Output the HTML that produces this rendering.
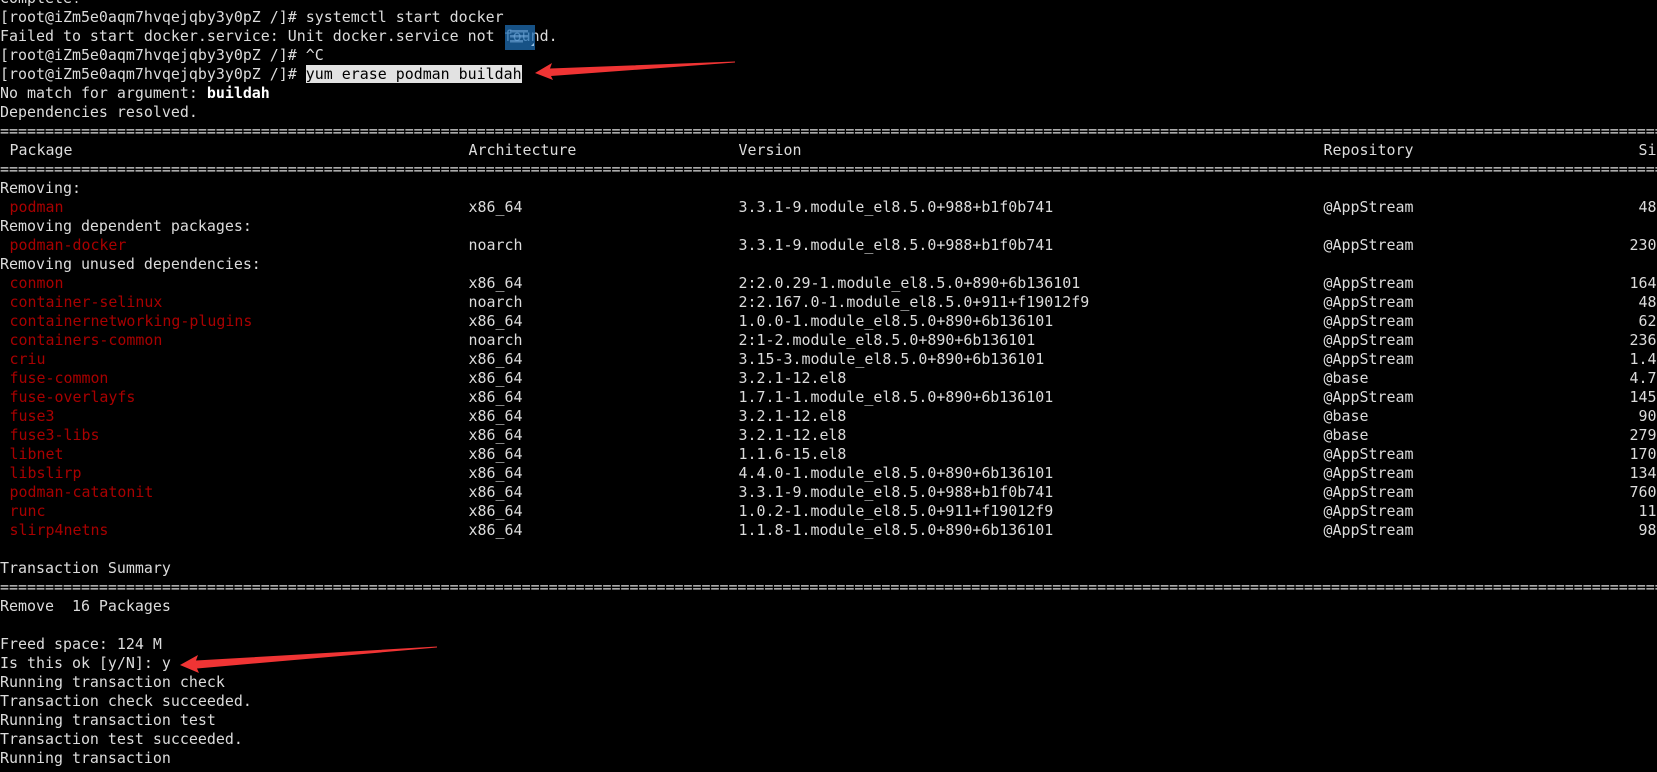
<!DOCTYPE html>
<html><head><meta charset="utf-8">
<style>
html,body{margin:0;padding:0;background:#000;width:1657px;height:772px;overflow:hidden;}
#t{position:absolute;left:0;top:-11.5px;width:1657px;font-family:"DejaVu Sans Mono","Liberation Mono",monospace;font-size:14.95px;line-height:19px;color:#dcdcdc;}
.l{position:relative;height:19px;white-space:pre;overflow:hidden;}
.l span{position:absolute;top:0;}
.c1{left:9.5px}.c2{left:468.5px}.c3{left:738.5px}.c4{left:1323.5px}
.c5{left:1629.5px;width:27px;text-align:right}
.r{color:#a80000}
.hl{background:#e2e2e2;color:#000}
b{font-weight:bold;color:#fff}
</style></head><body>
<div id="t">
<div class="l">Complete!</div>
<div class="l">[root@iZm5e0aqm7hvqejqby3y0pZ /]# systemctl start docker</div>
<div class="l">Failed to start docker.service: Unit docker.service not found.</div>
<div class="l">[root@iZm5e0aqm7hvqejqby3y0pZ /]# ^C</div>
<div class="l">[root@iZm5e0aqm7hvqejqby3y0pZ /]# <span class="hl" style="position:static">yum erase podman buildah</span></div>
<div class="l">No match for argument: <b>buildah</b></div>
<div class="l">Dependencies resolved.</div>
<div class="l">================================================================================================================================================================================================</div>
<div class="l"><span class="c1">Package</span><span class="c2">Architecture</span><span class="c3">Version</span><span class="c4">Repository</span><span style="left:1638.5px">Size</span></div>
<div class="l">================================================================================================================================================================================================</div>
<div class="l">Removing:</div>
<div class="l"><span class="c1 r">podman</span><span class="c2">x86_64</span><span class="c3">3.3.1-9.module_el8.5.0+988+b1f0b741</span><span class="c4">@AppStream</span><span class="c5">48</span></div>
<div class="l">Removing dependent packages:</div>
<div class="l"><span class="c1 r">podman-docker</span><span class="c2">noarch</span><span class="c3">3.3.1-9.module_el8.5.0+988+b1f0b741</span><span class="c4">@AppStream</span><span class="c5">230</span></div>
<div class="l">Removing unused dependencies:</div>
<div class="l"><span class="c1 r">conmon</span><span class="c2">x86_64</span><span class="c3">2:2.0.29-1.module_el8.5.0+890+6b136101</span><span class="c4">@AppStream</span><span class="c5">164</span></div>
<div class="l"><span class="c1 r">container-selinux</span><span class="c2">noarch</span><span class="c3">2:2.167.0-1.module_el8.5.0+911+f19012f9</span><span class="c4">@AppStream</span><span class="c5">48</span></div>
<div class="l"><span class="c1 r">containernetworking-plugins</span><span class="c2">x86_64</span><span class="c3">1.0.0-1.module_el8.5.0+890+6b136101</span><span class="c4">@AppStream</span><span class="c5">62</span></div>
<div class="l"><span class="c1 r">containers-common</span><span class="c2">noarch</span><span class="c3">2:1-2.module_el8.5.0+890+6b136101</span><span class="c4">@AppStream</span><span class="c5">236</span></div>
<div class="l"><span class="c1 r">criu</span><span class="c2">x86_64</span><span class="c3">3.15-3.module_el8.5.0+890+6b136101</span><span class="c4">@AppStream</span><span class="c5">1.4</span></div>
<div class="l"><span class="c1 r">fuse-common</span><span class="c2">x86_64</span><span class="c3">3.2.1-12.el8</span><span class="c4">@base</span><span class="c5">4.7</span></div>
<div class="l"><span class="c1 r">fuse-overlayfs</span><span class="c2">x86_64</span><span class="c3">1.7.1-1.module_el8.5.0+890+6b136101</span><span class="c4">@AppStream</span><span class="c5">145</span></div>
<div class="l"><span class="c1 r">fuse3</span><span class="c2">x86_64</span><span class="c3">3.2.1-12.el8</span><span class="c4">@base</span><span class="c5">90</span></div>
<div class="l"><span class="c1 r">fuse3-libs</span><span class="c2">x86_64</span><span class="c3">3.2.1-12.el8</span><span class="c4">@base</span><span class="c5">279</span></div>
<div class="l"><span class="c1 r">libnet</span><span class="c2">x86_64</span><span class="c3">1.1.6-15.el8</span><span class="c4">@AppStream</span><span class="c5">170</span></div>
<div class="l"><span class="c1 r">libslirp</span><span class="c2">x86_64</span><span class="c3">4.4.0-1.module_el8.5.0+890+6b136101</span><span class="c4">@AppStream</span><span class="c5">134</span></div>
<div class="l"><span class="c1 r">podman-catatonit</span><span class="c2">x86_64</span><span class="c3">3.3.1-9.module_el8.5.0+988+b1f0b741</span><span class="c4">@AppStream</span><span class="c5">760</span></div>
<div class="l"><span class="c1 r">runc</span><span class="c2">x86_64</span><span class="c3">1.0.2-1.module_el8.5.0+911+f19012f9</span><span class="c4">@AppStream</span><span class="c5">11</span></div>
<div class="l"><span class="c1 r">slirp4netns</span><span class="c2">x86_64</span><span class="c3">1.1.8-1.module_el8.5.0+890+6b136101</span><span class="c4">@AppStream</span><span class="c5">98</span></div>
<div class="l"> </div>
<div class="l">Transaction Summary</div>
<div class="l">================================================================================================================================================================================================</div>
<div class="l">Remove  16 Packages</div>
<div class="l"> </div>
<div class="l">Freed space: 124 M</div>
<div class="l">Is this ok [y/N]: y</div>
<div class="l">Running transaction check</div>
<div class="l">Transaction check succeeded.</div>
<div class="l">Running transaction test</div>
<div class="l">Transaction test succeeded.</div>
<div class="l">Running transaction</div>
</div>
<svg width="1657" height="772" style="position:absolute;left:0;top:0" xmlns="http://www.w3.org/2000/svg">
  <rect x="505" y="25" width="30" height="25" fill="#1f6db3" opacity="0.75"/>
  <rect x="510" y="30" width="18" height="2.5" fill="#6fa6d8" opacity="0.6"/>
  <rect x="510" y="35" width="18" height="2.5" fill="#6fa6d8" opacity="0.6"/>
  <rect x="510" y="40" width="13" height="2.5" fill="#6fa6d8" opacity="0.6"/>
  <path d="M531 46 L534 46 L534 43 Z" fill="#9cc3e6"/>
  <polygon points="535,73 552,63 550,68.5 735,61.5 735,62.5 551,76 553,80" fill="#f03434"/>
  <polygon points="180,665 198,655 196,660.5 437,646.5 437,647.5 197,668.5 199,673" fill="#f03434"/>
</svg>
</body></html>
